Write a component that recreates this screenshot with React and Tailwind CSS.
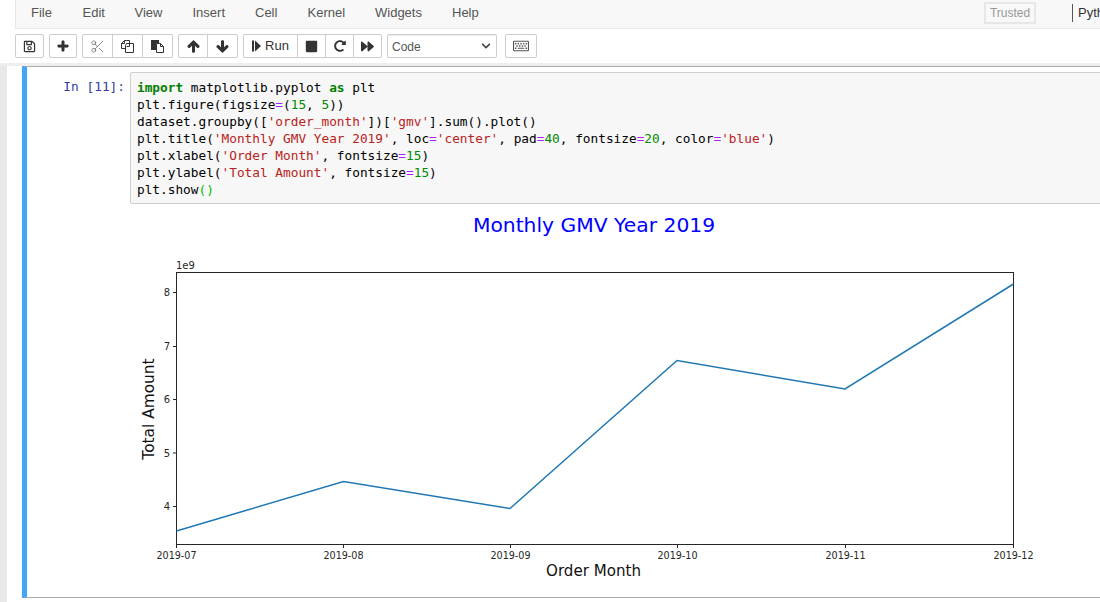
import React from 'react';
import {
  FaRegSave,
  FaPlus,
  FaArrowUp,
  FaArrowDown,
  FaStop,
  FaRedoAlt,
  FaForward,
  FaRegKeyboard,
  FaChevronDown
} from 'react-icons/fa';
import { Scissors } from 'lucide-react';

const menus = [
  ['File', 'w-[51.5px]'],
  ['Edit', 'w-[52px]'],
  ['View', 'w-[58px]'],
  ['Insert', 'w-[62.5px]'],
  ['Cell', 'w-[52.5px]'],
  ['Kernel', 'w-[67.5px]'],
  ['Widgets', 'w-[77px]'],
  ['Help', 'w-[40px]']
];

const K = ({ children }) => <span className="font-bold text-[#008000]">{children}</span>;
const S = ({ children }) => <span className="text-[#BA2121]">{children}</span>;
const O = ({ children }) => <span className="text-[#AA22FF]">{children}</span>;
const N = ({ children }) => <span className="text-[#008800]">{children}</span>;

const Btn = ({ w, className = '', children }) => (
  <div className={`${w} ${className} h-full flex items-center justify-center bg-white border border-[#cccccc] text-[#333333] -ml-px first:ml-0 first:rounded-l-[2px] last:rounded-r-[2px]`}>
    {children}
  </div>
);

const Group = ({ className = '', children }) => <div className={`flex h-full ${className}`}>{children}</div>;

const CopyIcon = () => (
  <svg width="15" height="15" viewBox="0 0 15 15" fill="none" stroke="#333333" strokeWidth="1">
    <path d="M6.5 1.5h-2l-3 3v5h4" />
    <path d="M4.5 1.5v3h-3" />
    <path d="M9.5 4.5h-3l-1 2v7h8v-9z" fill="#ffffff" />
    <path d="M9.5 4.5v3h-3" />
    <path d="M6.5 1.5h3v3" />
  </svg>
);

const PasteIcon = () => (
  <svg width="15" height="15" viewBox="0 0 15 15">
    <path d="M1 1h8v3H6v7H1z" fill="#333333" />
    <path d="M6.5 4.5h4l3 3v6h-7z" fill="#ffffff" stroke="#333333" />
    <path d="M10.5 4.5v3h3" fill="none" stroke="#333333" />
  </svg>
);

const RunIcon = () => (
  <svg width="9" height="12" viewBox="0 0 9 12" className="mr-[4px]" fill="#333333">
    <rect x="0" y="0.5" width="2" height="11" />
    <path d="M3 0.5 L9 6 L3 11.5 Z" />
  </svg>
);

const Toolbar = () => (
  <div className="h-[34px] pl-[15px] pt-[5px] pb-[5px] flex items-center bg-white">
    <Group><Btn w="w-[29px]"><FaRegSave className="text-[13px]" /></Btn></Group>
    <Group className="ml-[5px]"><Btn w="w-[28px]"><FaPlus className="text-[12px]" stroke="currentColor" strokeWidth={30} /></Btn></Group>
    <Group className="ml-[5px]">
      <Btn w="w-[31px]"><Scissors size={15} strokeWidth={1.2} className="text-[#666666]" /></Btn>
      <Btn w="w-[31px]"><CopyIcon /></Btn>
      <Btn w="w-[31px]"><PasteIcon /></Btn>
    </Group>
    <Group className="ml-[5px]">
      <Btn w="w-[30px]"><FaArrowUp className="text-[13px]" stroke="currentColor" strokeWidth={40} /></Btn>
      <Btn w="w-[31px]"><FaArrowDown className="text-[13px]" stroke="currentColor" strokeWidth={40} /></Btn>
    </Group>
    <Group className="ml-[5px]">
      <Btn w="w-[55px]"><RunIcon /><span className="text-[13px]">Run</span></Btn>
      <Btn w="w-[29px]"><FaStop className="text-[13px]" /></Btn>
      <Btn w="w-[29px]"><FaRedoAlt className="text-[12px]" /></Btn>
      <Btn w="w-[29px]"><FaForward className="text-[13px]" /></Btn>
    </Group>
    <div className="ml-[5px] w-[110px] h-full flex items-center justify-between pl-[4px] pr-[5px] bg-white border border-[#cccccc] rounded-[2px] shadow-[inset_0_1px_1px_rgba(0,0,0,0.075)] text-[12px] text-[#555555]">
      <span className="pt-[2px]">Code</span>
      <FaChevronDown className="text-[10px] text-[#444444]" />
    </div>
    <Group className="ml-[8px]"><Btn w="w-[32px]"><FaRegKeyboard className="text-[16px] text-[#555555]" /></Btn></Group>
  </div>
);

const points = '176.5,323 343.5,273.5 510,300.5 677,152.5 845,181 1013.5,76';
const xTicks = [
  [176.5, '2019-07'],
  [343.5, '2019-08'],
  [510.5, '2019-09'],
  [677.5, '2019-10'],
  [845.5, '2019-11'],
  [1013.5, '2019-12']
];
const yTicks = [[84.5, '8'], [138.5, '7'], [191.5, '6'], [245, '5'], [298.5, '4']];

// figure coords: x is page x, y is page y minus 208
const Chart = () => (
  <svg width="1100" height="389" className="block" fontFamily="'DejaVu Sans', sans-serif">
    <text x="594" y="24" textAnchor="middle" fontSize="20.3" fill="#0000ff">Monthly GMV Year 2019</text>
    <text x="176" y="61" fontSize="10" fill="#262626">1e9</text>
    <rect x="176.5" y="64.5" width="837" height="272" fill="#ffffff" stroke="#262626" strokeWidth="1" />
    <polyline points={points} fill="none" stroke="#1f77b4" strokeWidth="1.5" />
    {yTicks.map(([y, label]) => (
      <g key={label}>
        <line x1="173" x2="176.5" y1={y} y2={y} stroke="#262626" />
        <text x="170" y={y + 3.5} textAnchor="end" fontSize="10" fill="#262626">{label}</text>
      </g>
    ))}
    {xTicks.map(([x, label]) => (
      <g key={label}>
        <line x1={x} x2={x} y1="336.5" y2="340" stroke="#262626" />
        <text x={x} y="351" textAnchor="middle" fontSize="9.6" fill="#262626">{label}</text>
      </g>
    ))}
    <text x="593.5" y="368" textAnchor="middle" fontSize="15.1" fill="#111111">Order Month</text>
    <text transform="translate(154 201) rotate(-90)" textAnchor="middle" fontSize="15.4" fill="#111111">Total Amount</text>
  </svg>
);

export default function App() {
  return (
    <div className="w-[1100px] h-[602px] overflow-hidden bg-white font-['Liberation_Sans',sans-serif] flex flex-col">
      {/* Menu bar */}
      <div className="h-[29px] ml-[15px] flex items-center pl-[15px] pb-[2px] bg-[#f8f8f8] border-b border-l border-[#e7e7e7] text-[13px] text-[#555555]">
        {menus.map(([label, w]) => (
          <div key={label} className={w}>{label}</div>
        ))}
        <div className="ml-auto mr-[36px] h-[22px] w-[52px] flex items-center justify-center border-2 border-[#e7e7e7] text-[12px] text-[#999999]">Trusted</div>
        <div className="h-[18px] w-px bg-[#555555]" />
        <div className="ml-[5px] w-[22px] overflow-hidden text-[#333333]">Pyth</div>
      </div>

      <Toolbar />

      <div className="flex-1 flex min-h-0">
        <div className="w-[7px] bg-[#e8e8e8]" />
        <div className="flex-1 min-w-0 flex flex-col">
          <div className="h-[3px] -ml-[7px] bg-[#eeeeee]" />
          {/* Selected code cell */}
          <div className="h-[532px] ml-[15px] border-l-[5px] border-l-[#42a5f5] border-t border-b border-[#ababab] overflow-hidden">
            <div className="flex pt-[5px]">
              <div className="w-[98px] text-right pt-[6px] font-['DejaVu_Sans_Mono',monospace] text-[12.8px] leading-[17px] text-[#303F9F] shrink-0">In [11]:</div>
              <div className="ml-[5px] w-[1000px] h-[132px] shrink-0 bg-[#f7f7f7] border border-[#cfcfcf] rounded-[2px] pl-[6px] pt-[6px] font-['DejaVu_Sans_Mono',monospace] text-[12.78px] leading-[17px] text-black whitespace-pre">
                <div><K>import</K> matplotlib.pyplot <K>as</K> plt</div>
                <div>plt.figure(figsize<O>=</O>(<N>15</N>, <N>5</N>))</div>
                <div>dataset.groupby([<S>'order_month'</S>])[<S>'gmv'</S>].sum().plot()</div>
                <div>plt.title(<S>'Monthly GMV Year 2019'</S>, loc<O>=</O><S>'center'</S>, pad<O>=</O><N>40</N>, fontsize<O>=</O><N>20</N>, color<O>=</O><S>'blue'</S>)</div>
                <div>plt.xlabel(<S>'Order Month'</S>, fontsize<O>=</O><N>15</N>)</div>
                <div>plt.ylabel(<S>'Total Amount'</S>, fontsize<O>=</O><N>15</N>)</div>
                <div>plt.show<span className="text-[#00bb00]">()</span></div>
              </div>
            </div>
            <div className="-ml-[27px] mt-[4px]">
              <Chart />
            </div>
          </div>
        </div>
      </div>
    </div>
  );
}
